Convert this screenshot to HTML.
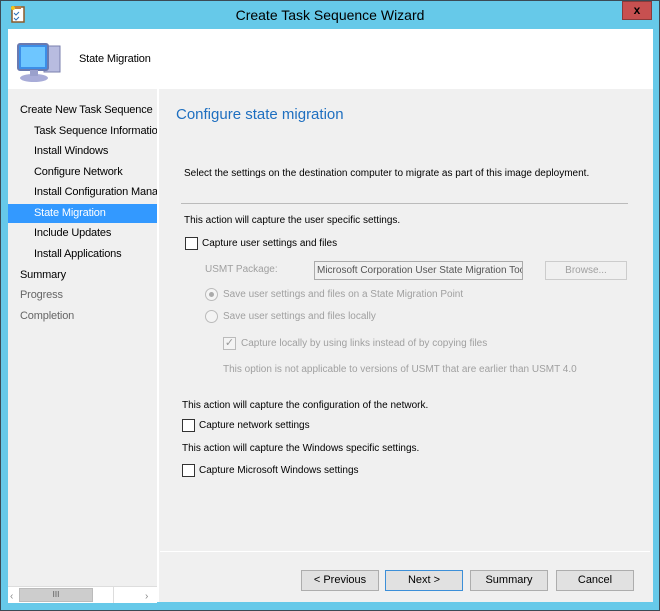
<!DOCTYPE html>
<html><head><style>
*{margin:0;padding:0;box-sizing:border-box}
body{width:660px;height:611px;background:#66c9e9;position:relative;overflow:hidden;font-family:"Liberation Sans",sans-serif;font-size:10px;color:#000}
.frame{position:absolute;left:0;top:0;width:660px;height:611px;border:1px solid #3b4a55}
.a{position:absolute;white-space:nowrap}
.n{font-size:11px;letter-spacing:-0.15px}
.g{color:#a0a0a0}
.cb{position:absolute;width:13px;height:13px;border:1px solid #333;background:#fff}
.rb{position:absolute;width:13px;height:13px;border:1px solid #bbb;border-radius:50%;background:#f4f4f4}
.btn{position:absolute;top:570px;height:21px;width:78px;border:1px solid #adadad;background:#e1e1e1;text-align:center;line-height:19px;font-size:11px}
</style></head><body>
<div class="frame"></div>
<svg class="a" style="left:10px;top:5px" width="16" height="18" viewBox="0 0 16 18"><rect x="2" y="2" width="12" height="15" fill="#fff" stroke="#8a5a2b" stroke-width="1.5"/><rect x="5" y="1" width="6" height="3" fill="#c08040"/><path d="M4 8l2 2 3-3M4 13l2 2 3-3" stroke="#2a6fb8" fill="none"/><circle cx="3" cy="3" r="2" fill="#f5c518"/></svg>
<div class="a" style="left:0;width:660px;top:7px;text-align:center;font-size:14px;color:#000">Create Task Sequence Wizard</div>
<div class="a" style="left:622px;top:1px;width:30px;height:19px;background:#c75050;border:1px solid #8a3a3a;color:#000;font-weight:bold;text-align:center;line-height:16px;font-size:12px">x</div>
<div class="a" style="left:8px;top:29px;width:645px;height:573px;background:#f0f0f0"></div>
<div class="a" style="left:8px;top:29px;width:645px;height:60px;background:#fff"></div>
<svg class="a" style="left:14px;top:38px" width="50" height="46" viewBox="0 0 50 46"><rect x="30" y="8" width="16" height="26" fill="#b8bce0" stroke="#7a7fae"/><rect x="4" y="6" width="30" height="26" rx="2" fill="#3c8ee8" stroke="#6a7ab0" stroke-width="2"/><rect x="7" y="9" width="24" height="20" fill="#6ec6ff"/><ellipse cx="20" cy="40" rx="14" ry="4" fill="#a8acd8"/><rect x="16" y="32" width="8" height="6" fill="#9aa0cc"/></svg>
<div class="a n" style="left:79px;top:53px">State Migration</div>
<div class="a" style="left:8px;top:89px;width:149px;height:513px;background:#f0f0f0"></div>
<div class="a" style="left:157px;top:89px;width:2px;height:513px;background:#fff"></div>
<div class="a n" style="left:20px;top:104px">Create New Task Sequence</div>
<div class="a n" style="left:34px;top:125px;width:123px;overflow:hidden">Task Sequence Information</div>
<div class="a n" style="left:34px;top:145px">Install Windows</div>
<div class="a n" style="left:34px;top:166px">Configure Network</div>
<div class="a n" style="left:34px;top:186px;width:123px;overflow:hidden">Install Configuration Manager</div>
<div class="a" style="left:8px;top:204px;width:149px;height:19px;background:#3399ff"></div>
<div class="a n" style="left:34px;top:207px;color:#fff">State Migration</div>
<div class="a n" style="left:34px;top:227px">Include Updates</div>
<div class="a n" style="left:34px;top:248px">Install Applications</div>
<div class="a n" style="left:20px;top:269px">Summary</div>
<div class="a n" style="left:20px;top:289px;color:#666">Progress</div>
<div class="a n" style="left:20px;top:310px;color:#666">Completion</div>
<div class="a" style="left:8px;top:586px;width:149px;height:17px;background:#fff;border-top:1px solid #ddd"></div>
<div class="a" style="left:10px;top:591px;color:#888">&lsaquo;</div>
<div class="a" style="left:19px;top:588px;width:74px;height:14px;background:#cdcdcd;border:1px solid #bbb;text-align:center;font-size:8px;line-height:12px;color:#555">III</div>
<div class="a" style="left:113px;top:587px;width:14px;height:16px;border-left:1px solid #ddd"></div>
<div class="a" style="left:145px;top:591px;color:#888">&rsaquo;</div>
<div class="a" style="left:176px;top:106px;font-size:15px;color:#1e6fc0">Configure state migration</div>
<div class="a" style="left:184px;top:168px">Select the settings on the destination computer to migrate as part of this image deployment.</div>
<div class="a" style="left:181px;top:203px;width:447px;height:1px;background:#bbb"></div>
<div class="a" style="left:184px;top:215px">This action will capture the user specific settings.</div>
<div class="cb" style="left:185px;top:237px"></div>
<div class="a" style="left:202px;top:238px">Capture user settings and files</div>
<div class="a g" style="left:205px;top:264px">USMT Package:</div>
<div class="a" style="left:314px;top:261px;width:209px;height:19px;border:1px solid #aaa;background:#f0f0f0;color:#555;padding:3px 2px;overflow:hidden">Microsoft Corporation User State Migration Tool</div>
<div class="a g" style="left:545px;top:261px;width:82px;height:19px;border:1px solid #ccc;text-align:center;line-height:17px">Browse...</div>
<div class="rb" style="left:205px;top:288px"><div style="width:5px;height:5px;border-radius:50%;background:#aaa;margin:3px"></div></div>
<div class="a g" style="left:223px;top:289px">Save user settings and files on a State Migration Point</div>
<div class="rb" style="left:205px;top:310px"></div>
<div class="a g" style="left:223px;top:311px">Save user settings and files locally</div>
<div class="cb" style="left:223px;top:337px;border-color:#bbb;background:#f4f4f4;color:#999;font-size:11px;line-height:11px;text-align:center">✓</div>
<div class="a g" style="left:241px;top:338px">Capture locally by using links instead of by copying files</div>
<div class="a g" style="left:223px;top:364px">This option is not applicable to versions of USMT that are earlier than USMT 4.0</div>
<div class="a" style="left:182px;top:400px">This action will capture the configuration of the network.</div>
<div class="cb" style="left:182px;top:419px"></div>
<div class="a" style="left:199px;top:420px">Capture network settings</div>
<div class="a" style="left:182px;top:443px">This action will capture the Windows specific settings.</div>
<div class="cb" style="left:182px;top:464px"></div>
<div class="a" style="left:199px;top:465px">Capture Microsoft Windows settings</div>
<div class="a" style="left:160px;top:551px;width:490px;height:1px;background:#fff"></div>
<div class="btn" style="left:301px">&lt; Previous</div>
<div class="btn" style="left:385px;border-color:#3c8fd8">Next &gt;</div>
<div class="btn" style="left:470px">Summary</div>
<div class="btn" style="left:556px">Cancel</div>
</body></html>
